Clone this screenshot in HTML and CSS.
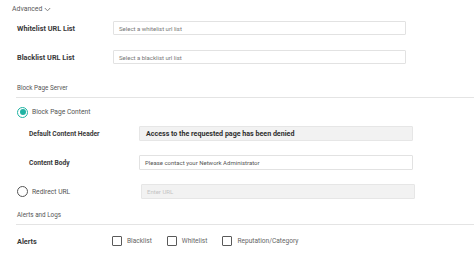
FILE: index.html
```html
<!DOCTYPE html>
<html>
<head>
<meta charset="utf-8">
<link rel="stylesheet" href="styles.css">
</head>
<body>
<div class="page">
  <div class="advanced">Advanced <svg class="chev" width="7" height="5" viewBox="0 0 7 5"><path d="M0.8 1 L3.5 3.8 L6.2 1" fill="none" stroke="#777" stroke-width="0.9"/></svg></div>

  <div class="row row-first">
    <div class="label">Whitelist URL List</div>
    <div class="input wide"><span class="ph">Select a whitelist url list</span></div>
  </div>
  <div class="row row-second">
    <div class="label">Blacklist URL List</div>
    <div class="input wide"><span class="ph">Select a blacklist url list</span></div>
  </div>

  <div class="section section-block">Block Page Server</div>

  <div class="radio-row radio-first">
    <span class="radio checked"><span class="dot"></span></span>
    <span class="radio-label">Block Page Content</span>
  </div>

  <div class="sub-row sub-first">
    <div class="sub-label">Default Content Header</div>
    <div class="input mid grey"><span class="val">Access to the requested page has been denied</span></div>
  </div>
  <div class="sub-row sub-next">
    <div class="sub-label">Content Body</div>
    <div class="input mid"><span class="ph dark">Please contact your Network Administrator</span></div>
  </div>

  <div class="radio-row redirect">
    <div class="radio-part">
      <span class="radio"></span>
      <span class="radio-label">Redirect URL</span>
    </div>
    <div class="input mid grey"><span class="ph light">Enter URL</span></div>
  </div>

  <div class="section section-alerts">Alerts and Logs</div>

  <div class="row alerts">
    <div class="label short">Alerts</div>
    <div class="checks">
      <span class="check"><span class="box"></span>Blacklist</span>
      <span class="check"><span class="box"></span>Whitelist</span>
      <span class="check"><span class="box"></span>Reputation/Category</span>
    </div>
  </div>
</div>
</body>
</html>
```

FILE: styles.css
```css
* { box-sizing: border-box; }
html, body { margin: 0; padding: 0; background: #fff; }
body {
  font-family: Roboto, "Liberation Sans", sans-serif;
  color: #333;
  width: 474px;
  height: 259px;
  overflow: hidden;
}
.page { padding-left: 16px; }

.advanced {
  height: 18px;
  line-height: 18px;
  margin-left: -4px;
  font-size: 6.9px;
  color: #5a5a5a;
  display: flex;
  align-items: center;
  gap: 2px;
}
.chev { margin-top: 1px; }

.row {
  display: flex;
  align-items: center;
  height: 14px;
  padding-left: 1px;
}
.row-first { margin-top: 3px; }
.row-second { margin-top: 15px; }
.label {
  width: 96px;
  font-size: 7.3px;
  font-weight: 700;
  color: #3a3a3a;
}
.label.short { width: 95px; }
.input {
  height: 100%;
  border: 1px solid #e2e2e2;
  border-radius: 1px;
  background: #fff;
  display: flex;
  align-items: center;
  padding-left: 5px;
  font-size: 6px;
}
.input.wide { width: 293px; }
.ph { color: #777; }
.ph.dark { color: #555; }
.ph.light { color: #c4c4c4; }

.section {
  padding-left: 1px;
  line-height: 14px;
  font-size: 6.3px;
  color: #555;
  border-bottom: 1px solid #e4e4e4;
  padding-bottom: 2px;
}
.section-block { margin-top: 17px; }
.section-alerts { margin-top: 9px; }

.radio-row {
  display: flex;
  align-items: center;
  height: 12px;
  padding-left: 1px;
}
.radio-first { margin-top: 8px; }
.radio-part { display: flex; align-items: center; width: 124px; }
.radio {
  width: 11px;
  height: 11px;
  border-radius: 50%;
  border: 1.5px solid #555;
  display: inline-flex;
  align-items: center;
  justify-content: center;
  flex: none;
}
.radio.checked { border-color: #1fb3a3; }
.radio .dot {
  width: 6px;
  height: 6px;
  border-radius: 50%;
  background: #1fb3a3;
}
.radio-label {
  margin-left: 4px;
  font-size: 6.7px;
  color: #555;
}

.sub-row {
  display: flex;
  align-items: center;
  height: 15px;
  padding-left: 13px;
}
.sub-first { margin-top: 8px; }
.sub-next { margin-top: 14px; }
.sub-label {
  width: 110px;
  font-size: 6.7px;
  font-weight: 700;
  color: #3a3a3a;
}
.input.mid { width: 274px; }
.input.grey { background: #f2f2f2; border-color: #e6e6e6; }
.val {
  font-size: 7.1px;
  font-weight: 700;
  color: #2e2e2e;
  padding-left: 1px;
}

.redirect { margin-top: 14px; height: 15px; }
.redirect .input { height: 15px; }

.alerts { margin-top: 10px; height: 12px; }
.checks { display: flex; align-items: center; font-size: 6.6px; color: #666; }
.check { display: inline-flex; align-items: center; margin-right: 15px; }
.box {
  width: 10px;
  height: 10px;
  border: 1.3px solid #5a5a5a;
  border-radius: 1px;
  margin-right: 5px;
}
```
